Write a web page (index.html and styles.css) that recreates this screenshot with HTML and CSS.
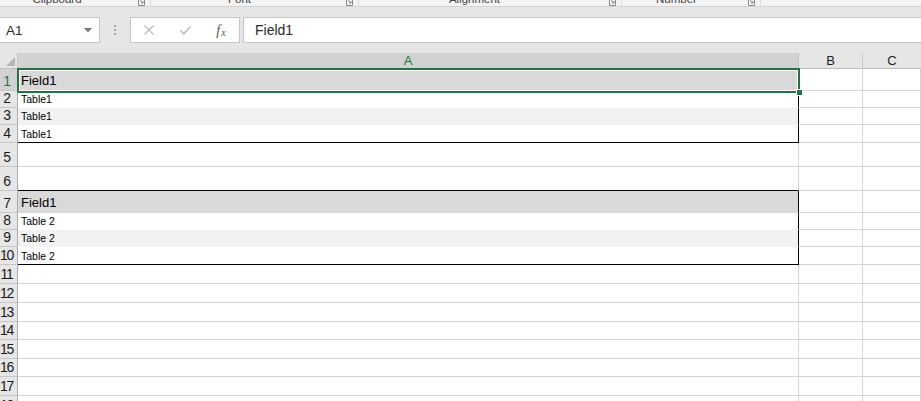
FILE: index.html
```html
<!DOCTYPE html>
<html lang="en">
<head>
<meta charset="utf-8">
<title>Sheet</title>
<link rel="stylesheet" href="styles.css">
</head>
<body>
<div class="ribbon">
  <div class="grp g1"><span class="lbl">Clipboard</span><svg class="launch" width="7" height="6" viewBox="0 0 7 6"><path d="M0.5 0 V5.5 H6.5 V0" fill="none" stroke="#8a8a8a" stroke-width="1"/><path d="M2 0 L5 3 M5 1 V3 H3" fill="none" stroke="#8a8a8a" stroke-width="1"/></svg></div>
  <div class="grp g2"><span class="lbl">Font</span><svg class="launch" width="7" height="6" viewBox="0 0 7 6"><path d="M0.5 0 V5.5 H6.5 V0" fill="none" stroke="#8a8a8a" stroke-width="1"/><path d="M2 0 L5 3 M5 1 V3 H3" fill="none" stroke="#8a8a8a" stroke-width="1"/></svg></div>
  <div class="grp g3"><span class="lbl">Alignment</span><svg class="launch" width="7" height="6" viewBox="0 0 7 6"><path d="M0.5 0 V5.5 H6.5 V0" fill="none" stroke="#8a8a8a" stroke-width="1"/><path d="M2 0 L5 3 M5 1 V3 H3" fill="none" stroke="#8a8a8a" stroke-width="1"/></svg></div>
  <div class="grp g4"><span class="lbl">Number</span><svg class="launch" width="7" height="6" viewBox="0 0 7 6"><path d="M0.5 0 V5.5 H6.5 V0" fill="none" stroke="#8a8a8a" stroke-width="1"/><path d="M2 0 L5 3 M5 1 V3 H3" fill="none" stroke="#8a8a8a" stroke-width="1"/></svg></div>
</div>

<div class="fbar">
  <div class="namebox">
    <span class="ref">A1</span>
    <svg class="caret" width="8" height="5" viewBox="0 0 8 5"><path d="M0 0 H8 L4 4.5 Z" fill="#7a7a7a"/></svg>
  </div>
  <div class="dots"><i></i><i></i><i></i></div>
  <div class="fnbox">
    <span class="slot"><svg width="10" height="10" viewBox="0 0 10 10"><path d="M0.5 0.5 L9.5 9.5 M9.5 0.5 L0.5 9.5" stroke="#bdbdbd" stroke-width="1.3"/></svg></span>
    <span class="slot"><svg width="11" height="9" viewBox="0 0 11 9"><path d="M0.6 4.6 L3.8 7.8 L10.4 0.8" fill="none" stroke="#bdbdbd" stroke-width="1.6"/></svg></span>
    <span class="slot fx">f<span class="fxx">x</span></span>
  </div>
  <div class="formula">Field1</div>
</div>

<div class="sheet-wrap">
  <div class="sheet">
    <div class="corner"><svg width="9" height="9" viewBox="0 0 9 9"><path d="M9 0 V9 H0 Z" fill="#b5b5b5"/></svg></div>
    <div class="ch ch-sel">A</div>
    <div class="ch">B</div>
    <div class="ch ch-last">C</div>

    <div class="rh rh-sel">1</div>
    <div class="c a thead t-r nob">Field1</div>
    <div class="c"></div><div class="c"></div>

    <div class="rh">2</div>
    <div class="c a trow t-r nob">Table1</div>
    <div class="c"></div><div class="c"></div>

    <div class="rh">3</div>
    <div class="c a trow band t-r nob">Table1</div>
    <div class="c"></div><div class="c"></div>

    <div class="rh">4</div>
    <div class="c a trow t-r t-b">Table1</div>
    <div class="c"></div><div class="c"></div>

    <div class="rh">5</div>
    <div class="c a"></div>
    <div class="c"></div><div class="c"></div>

    <div class="rh">6</div>
    <div class="c a t-b"></div>
    <div class="c"></div><div class="c"></div>

    <div class="rh">7</div>
    <div class="c a thead t-r nob">Field1</div>
    <div class="c"></div><div class="c"></div>

    <div class="rh">8</div>
    <div class="c a trow t-r nob">Table 2</div>
    <div class="c"></div><div class="c"></div>

    <div class="rh">9</div>
    <div class="c a trow band t-r nob">Table 2</div>
    <div class="c"></div><div class="c"></div>

    <div class="rh">10</div>
    <div class="c a trow t-r t-b">Table 2</div>
    <div class="c"></div><div class="c"></div>

    <div class="rh">11</div><div class="c a"></div><div class="c"></div><div class="c"></div>
    <div class="rh">12</div><div class="c a"></div><div class="c"></div><div class="c"></div>
    <div class="rh">13</div><div class="c a"></div><div class="c"></div><div class="c"></div>
    <div class="rh">14</div><div class="c a"></div><div class="c"></div><div class="c"></div>
    <div class="rh">15</div><div class="c a"></div><div class="c"></div><div class="c"></div>
    <div class="rh">16</div><div class="c a"></div><div class="c"></div><div class="c"></div>
    <div class="rh">17</div><div class="c a"></div><div class="c"></div><div class="c"></div>
    <div class="rh">18</div><div class="c a"></div><div class="c"></div><div class="c"></div>
  </div>
  <div class="selection"><span class="handle"></span></div>
</div>
</body>
</html>
```

FILE: styles.css
```css
html, body {
  margin: 0;
  padding: 0;
  width: 921px;
  height: 401px;
  overflow: hidden;
  background: #ffffff;
  font-family: "Liberation Sans", Arial, sans-serif;
}

/* ---------- ribbon strip ---------- */
.ribbon {
  display: flex;
  height: 6px;
  background: #f3f3f3;
  border-bottom: 1px solid #d4d4d4;
  overflow: hidden;
}
.grp {
  position: relative;
  display: flex;
  box-sizing: border-box;
  border-right: 1px solid #dcdcdc;
  height: 6px;
}
.g1 { width: 151px; }
.g2 { width: 208px; }
.g3 { width: 263px; }
.g4 { width: 139px; }
.lbl {
  flex: 1;
  text-align: center;
  font-size: 11.5px;
  line-height: 12px;
  margin-top: -7px;
  color: #444;
}
.g1 .lbl { padding-right: 24px; }
.g2 .lbl { padding-right: 18px; }
.g3 .lbl { padding-right: 19px; }
.g4 .lbl { padding-right: 17px; }
.launch {
  margin: 0 5px 0 0;
  align-self: flex-start;
}

/* ---------- formula bar ---------- */
.fbar {
  display: flex;
  align-items: flex-start;
  height: 46px;
  box-sizing: border-box;
  padding-top: 10px;
  background: #e6e6e6;
}
.namebox {
  display: flex;
  align-items: center;
  justify-content: space-between;
  box-sizing: border-box;
  width: 101px;
  height: 26px;
  margin-left: -1px;
  background: #fff;
  border: 1px solid #c6c6c6;
  padding: 0 7px 0 6px;
}
.ref {
  font-size: 13.5px;
  color: #2b2b2b;
}
.caret { margin-top: 1px; }
.dots {
  width: 30px;
  height: 26px;
  display: flex;
  flex-direction: column;
  align-items: center;
  justify-content: center;
  gap: 2px;
}
.dots i {
  display: block;
  width: 2px;
  height: 2px;
  background: #a8a8a8;
}
.fnbox {
  display: flex;
  box-sizing: border-box;
  width: 110px;
  height: 26px;
  background: #fff;
  border: 1px solid #c6c6c6;
}
.slot {
  width: 36px;
  display: flex;
  align-items: center;
  justify-content: center;
}
.fx {
  font-family: "Liberation Serif", "Times New Roman", serif;
  font-style: italic;
  font-size: 14px;
  color: #555;
  padding-top: 1px;
}
.fxx {
  font-size: 10px;
  margin-left: 1px;
  margin-top: 3px;
}
.formula {
  flex: 1;
  margin-left: 3px;
  margin-right: -2px;
  box-sizing: border-box;
  height: 26px;
  background: #fff;
  border: 1px solid #c6c6c6;
  padding-left: 11px;
  font-size: 14px;
  line-height: 24px;
  color: #2b2b2b;
}

/* ---------- sheet grid ---------- */
.sheet-wrap {
  position: relative;
}
.sheet {
  display: grid;
  grid-template-columns: 18px 781px 64px 58px;
  grid-template-rows: 16px 22px 17px 17px 18px 24px 24px 22px 17px 17px 18px 19px 19px 19px 18px 19px 18px 19px 19px;
}
.corner {
  background: #e6e6e6;
  box-sizing: border-box;
  border-right: 1px solid #c6c6c6;
  border-bottom: 1px solid #bdbdbd;
  display: flex;
  align-items: flex-end;
  justify-content: flex-end;
  padding: 0 2px 2px 0;
}
.ch {
  background: #e6e6e6;
  box-sizing: border-box;
  border-right: 1px solid #cbcbcb;
  border-bottom: 1px solid #bdbdbd;
  font-size: 13px;
  line-height: 15px;
  text-align: center;
  color: #222;
}
.ch-sel {
  background: #d2d2d2;
  color: #217346;
  border-right-color: #c3c3c3;
}
.ch-last { border-right: none; }
.rh {
  background: #e6e6e6;
  box-sizing: border-box;
  border-right: 1px solid #ababab;
  border-bottom: 1px solid #c8c8c8;
  font-size: 14px;
  line-height: 15px;
  color: #1a1a1a;
  display: flex;
  align-items: flex-end;
  justify-content: center;
  padding: 0 4px 1px 0;
  letter-spacing: -1.2px;
  white-space: nowrap;
}
.rh-sel {
  background: #d2d2d2;
  color: #217346;
}
.c {
  box-sizing: border-box;
  border-right: 1px solid #d4d4d4;
  border-bottom: 1px solid #d4d4d4;
  display: flex;
  align-items: center;
  padding-left: 3px;
  color: #000;
  white-space: nowrap;
}
.thead {
  background: #d9d9d9;
  font-size: 13px;
  padding-top: 1px;
}
.trow {
  background: #fff;
  font-size: 10.5px;
}
.band { background: #f2f2f2; }
.t-r { border-right-color: #000; }
.t-b { border-bottom-color: #000; }
.nob { border-bottom-color: transparent; }

/* selection overlay */
.selection {
  position: absolute;
  left: 17px;
  top: 15px;
  width: 783px;
  height: 25px;
  box-sizing: border-box;
  border: 2px solid #217346;
  box-shadow: inset 0 0 0 1px #ffffff;
}
.handle {
  position: absolute;
  right: -5px;
  bottom: -5px;
  width: 5px;
  height: 5px;
  background: #217346;
  border: 1px solid #ffffff;
}
```
